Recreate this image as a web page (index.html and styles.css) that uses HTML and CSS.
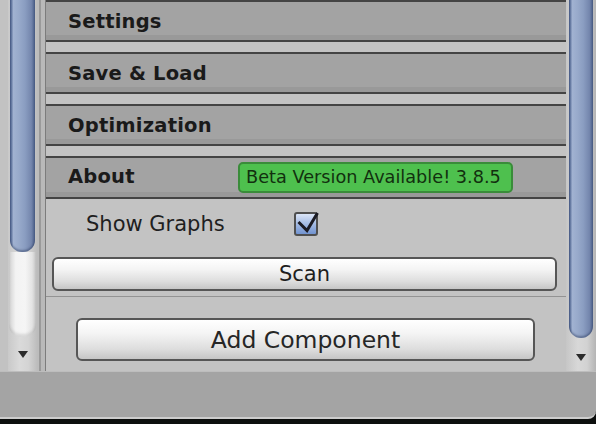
FILE: index.html
```html
<!DOCTYPE html>
<html>
<head>
<meta charset="utf-8">
<link rel="stylesheet" href="styles.css">
</head>
<body>
<div class="window">
  <div class="main">
    <div class="gutter"></div>
    <div class="vscroll vscroll-left">
      <div class="thumb thumb-left"></div>
      <div class="track-end"></div>
      <div class="arrow-box"><span class="arrow"></span></div>
    </div>
    <div class="splitter"></div>
    <div class="panel">
      <div class="section-header"><span class="section-title">Settings</span></div>
      <div class="section-header"><span class="section-title">Save &amp; Load</span></div>
      <div class="section-header"><span class="section-title">Optimization</span></div>
      <div class="section-header section-about">
        <span class="section-title about-title">About</span>
        <span class="badge">Beta Version Available! 3.8.5</span>
      </div>
      <div class="about-body">
        <div class="toggle-row">
          <span class="toggle-label">Show Graphs</span>
          <span class="checkbox">
            <svg class="check" width="20" height="20" viewBox="0 0 20 20">
              <path d="M2.5 8 L11 16.5 L21.5 -1" fill="none" stroke="#1b1b24" stroke-width="3" stroke-linejoin="miter"/>
            </svg>
          </span>
        </div>
        <button class="btn btn-scan">Scan</button>
      </div>
      <div class="add-area">
        <button class="btn btn-add">Add Component</button>
      </div>
    </div>
    <div class="vscroll vscroll-right">
      <div class="thumb thumb-right"></div>
      <div class="arrow-box arrow-box-right"><span class="arrow"></span></div>
    </div>
  </div>
  <div class="statusbar"></div>
</div>
</body>
</html>
```

FILE: styles.css
```css
html, body {
  margin: 0;
  padding: 0;
}
body {
  width: 596px;
  height: 424px;
  overflow: hidden;
  background: #0d0f0e;
  font-family: "DejaVu Sans", "Liberation Sans", sans-serif;
}
.window {
  display: flex;
  flex-direction: column;
  width: 596px;
}
.main {
  display: flex;
  height: 371px;
}
.gutter {
  width: 8px;
  background: #c2c2c2;
}
.vscroll {
  display: flex;
  flex-direction: column;
  box-sizing: border-box;
}
.vscroll-left {
  width: 29px;
  padding: 0 2px;
  background: linear-gradient(to right, #c9c9c9, #dadada 40%, #d4d4d4 70%, #bdbdbd);
}
.vscroll-right {
  width: 30px;
  padding: 0 3px;
  background: linear-gradient(to right, #c6c6c6, #d8d8d8 40%, #d2d2d2 70%, #b4b4b4);
}
.thumb {
  border-radius: 0 0 12px 12px;
  background: linear-gradient(to right, #4c608b 0, #5a6e98 4%, #a1b2d1 14%, #98aacb 35%, #8a9dc1 60%, #7486ad 85%, #4b5e87 100%);
  box-shadow: inset 0 -2px 2px rgba(40, 55, 90, 0.45);
}
.thumb-left {
  height: 252px;
}
.thumb-right {
  height: 338px;
}
.track-end {
  height: 85px;
  margin: 0 -1px;
  border-radius: 0 0 12px 12px;
  background: linear-gradient(to right, #d2d2d2, #f3f3f3 25%, #f5f5f5 60%, #e4e4e4 85%, #c9c9c9);
  box-shadow: inset 0 -3px 3px rgba(0, 0, 0, 0.12);
}
.arrow-box {
  flex: 1;
  display: flex;
  align-items: center;
  justify-content: center;
}
.arrow-box-right {
  padding-top: 5px;
}
.arrow {
  width: 0;
  height: 0;
  border-left: 5px solid transparent;
  border-right: 5px solid transparent;
  border-top: 7px solid #2b2b2b;
}
.splitter {
  width: 9px;
  background: linear-gradient(to right, #bcbcbc 0 2px, #9a9a9a 2px 4px, #b9b9b9 4px 8px, #7c7c7c 8px 9px);
}
.panel {
  width: 520px;
  display: flex;
  flex-direction: column;
  background: #c3c3c3;
}
.section-header {
  height: 42px;
  box-sizing: border-box;
  display: flex;
  align-items: center;
  padding: 0 0 0 22px;
  margin-bottom: 10px;
  border-top: 2px solid #444;
  border-bottom: 2px solid #444;
  background: #a3a3a3;
  box-shadow: inset 0 -5px 0 #999;
}
.section-title {
  font-family: "DejaVu Sans", sans-serif;
  font-weight: bold;
  font-size: 19.5px;
  letter-spacing: 0.2px;
  color: #1a1a1a;
}
.section-about {
  height: 43px;
  margin-bottom: 0;
}
.about-title {
  flex: 0 0 170px;
  padding-bottom: 2px;
}
.badge {
  box-sizing: border-box;
  width: 275px;
  height: 31px;
  padding-left: 6px;
  border: 2px solid #3a8c3a;
  border-radius: 5px;
  background: #4ec04e;
  color: #12300f;
  font-family: "DejaVu Sans", sans-serif;
  font-size: 17.7px;
  line-height: 27px;
  white-space: nowrap;
}
.about-body {
  display: flex;
  flex-direction: column;
  padding-bottom: 5px;
  border-bottom: 1px solid #939393;
}
.toggle-row {
  display: flex;
  align-items: center;
  height: 25px;
  margin-top: 12px;
}
.toggle-label {
  box-sizing: border-box;
  flex: 0 0 248px;
  padding-left: 40px;
  font-size: 21px;
  color: #1f1f1f;
}
.checkbox {
  box-sizing: border-box;
  width: 24px;
  height: 24px;
  border: 2px solid #4f4f4f;
  border-radius: 3px;
  background: linear-gradient(#dbe5f7, #a9bfe6 45%, #7193d0);
}
.check {
  display: block;
  overflow: visible;
}
.btn {
  box-sizing: border-box;
  display: block;
  padding: 0;
  border: 2px solid #565656;
  border-radius: 6px;
  background: linear-gradient(#ffffff, #f4f4f4 35%, #dddddd 75%, #c6c6c6);
  color: #1e1e1e;
  font-family: "DejaVu Sans", sans-serif;
  text-align: center;
}
.btn-scan {
  height: 34px;
  margin: 21px 9px 0 6px;
  font-size: 21px;
  line-height: 30px;
}
.add-area {
  flex: 1;
  padding: 21px 31px 0 30px;
}
.btn-add {
  width: 100%;
  height: 43px;
  font-size: 23.5px;
  line-height: 38px;
  color: #262626;
}
.statusbar {
  height: 48px;
  box-sizing: border-box;
  border-top: 1px solid #bdbdbd;
  border-bottom: 2px solid #cdcdcd;
  border-bottom-right-radius: 8px;
  background: #a4a4a4;
}
```
